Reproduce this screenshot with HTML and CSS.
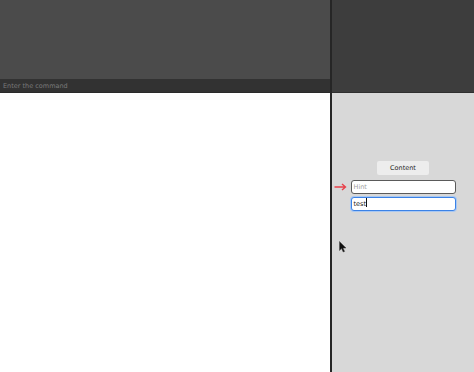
FILE: index.html
```html
<!DOCTYPE html>
<html lang="en">
<head>
    <meta charset="UTF-8">
    <title>Command Window</title>
    <link rel="stylesheet" href="styles.css">
</head>
<body>
    <div class="window">
        <div class="main">
            <div class="preview"></div>
            <div class="command">Enter the command</div>
            <div class="canvas"></div>
        </div>
        <div class="divider"></div>
        <div class="side">
            <div class="side-top"></div>
            <div class="panel">
                <button class="btn">Content</button>
                <div class="field-row">
                    <svg class="arrow" width="13" height="8" viewBox="0 0 13 8">
                        <path d="M0.5 4 H11 M8 1 L11.5 4 L8 7" fill="none" stroke="#e8404a" stroke-width="1.4"/>
                    </svg>
                    <div class="field hint">Hint</div>
                </div>
                <div class="field focus">test<span class="caret"></span></div>
            </div>
        </div>
        <svg class="pointer" width="8" height="12" viewBox="0 0 8 12">
            <path d="M0.5 0.5 L0.5 9.5 L2.6 7.6 L4.2 11 L5.6 10.4 L4 7.1 L7 7 Z" fill="#111" stroke="#444" stroke-width="0.5"/>
        </svg>
    </div>
</body>
</html>
```

FILE: styles.css
```css
* {
    margin: 0;
    padding: 0;
    box-sizing: border-box;
    font-family: 'DejaVu Sans', sans-serif;
}

body {
    background: #ffffff;
    overflow: hidden;
}

.window {
    position: relative;
    display: flex;
    width: 474px;
    height: 372px;
}

/* Left side */
.main {
    width: 330px;
    display: flex;
    flex-direction: column;
}

.preview {
    height: 79px;
    background: #4b4b4b;
}

.command {
    height: 14px;
    background: #323232;
    color: #7a7a7a;
    font-size: 6.5px;
    line-height: 14px;
    padding-left: 3px;
    border-bottom: 1px solid #2a2a2a;
}

.canvas {
    flex: 1;
    background: #ffffff;
}

.divider {
    width: 2px;
    background: #262626;
}

/* Right side */
.side {
    flex: 1;
    display: flex;
    flex-direction: column;
}

.side-top {
    height: 93px;
    background: #3d3d3d;
    border-bottom: 1px solid #2f2f2f;
}

.panel {
    flex: 1;
    background: #d8d8d8;
    display: flex;
    flex-direction: column;
    align-items: center;
    padding-top: 68px;
}

.btn {
    width: 52px;
    height: 14px;
    border: none;
    border-radius: 2px;
    background: #ededed;
    color: #222;
    font-size: 6.5px;
    margin-bottom: 5px;
}

.field-row {
    position: relative;
}

.arrow {
    position: absolute;
    left: -17px;
    top: 3px;
}

.field {
    width: 105px;
    height: 14px;
    background: #ffffff;
    border: 1px solid #5a5a5a;
    border-radius: 3px;
    font-size: 6.5px;
    line-height: 12px;
    padding-left: 2px;
    color: #111;
}

.hint {
    color: #a0a0a0;
    margin-bottom: 3px;
}

.focus {
    border: 1px solid #3b82e6;
    box-shadow: 0 0 0 1px #a9c8f2;
}

.caret {
    display: inline-block;
    width: 1px;
    height: 9px;
    background: #111;
    vertical-align: -1px;
}

.pointer {
    position: absolute;
    left: 339px;
    top: 241px;
}
```
